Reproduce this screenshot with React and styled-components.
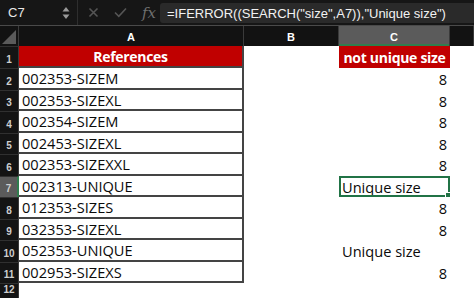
import React from "react"
import styled, { createGlobalStyle } from "styled-components"

const GlobalStyle = createGlobalStyle`
  html, body {
    margin: 0;
    padding: 0;
    background: #000;
  }
  #root {
    width: 474px;
    height: 298px;
    overflow: hidden;
  }
`

const Frame = styled.div`
  display: flex;
  flex-direction: column;
  width: 474px;
  height: 298px;
  background: #0d0d0d;
`

//Formula bar
const FormulaBar = styled.div`
  display: flex;
  align-items: center;
  height: 25px;
  background: #161616;
  border-bottom: 1px solid #4a4a4a;
  font-family: "Liberation Sans", Arial, sans-serif;
`

const NameBox = styled.div`
  display: flex;
  align-items: center;
  justify-content: space-between;
  box-sizing: border-box;
  width: 78px;
  height: 100%;
  padding: 0 7px 0 8px;
  color: #e8e8e8;
  font-size: 13px;
  border-right: 1px solid #2e2e2e;
`

const Spinner = styled.svg`
  width: 8px;
  height: 14px;
`

const Actions = styled.div`
  display: flex;
  align-items: center;
  gap: 15px;
  box-sizing: border-box;
  padding: 0 0 0 10px;
  width: 82px;
`

const Fx = styled.span`
  font-family: "DejaVu Serif", "Liberation Serif", serif;
  font-style: italic;
  color: #6e6e6e;
  font-size: 15px;
`

const FormulaInput = styled.div`
  flex: 1;
  display: flex;
  align-items: center;
  height: 20px;
  margin-top: 1px;
  padding-left: 7px;
  background: #2a2a2a;
  border-radius: 3px 0 0 3px;
  color: #f2f2f2;
  font-size: 13px;
  white-space: nowrap;
`

//Sheet grid
const Sheet = styled.div`
  flex: 1;
  display: grid;
  grid-template-columns: 19px 225px 95px 111px 1fr;
  grid-template-rows: 20px 22px repeat(10, 21.5px) 1fr;
  background: #ffffff;
  font-family: "Open Sans", "Noto Sans", sans-serif;
`

const Corner = styled.div`
  background: #121212;
  border-right: 1px solid #3a3a3a;
  position: relative;
  overflow: hidden;
  &::after {
    content: "";
    position: absolute;
    right: 2px;
    bottom: 2px;
    border-style: solid;
    border-width: 0 0 14px 14px;
    border-color: transparent transparent #5a5a5a transparent;
  }
`

const ColHead = styled.div`
  display: flex;
  align-items: center;
  justify-content: center;
  background: ${({ active }) => (active ? "#5b5b5b" : "#121212")};
  border-right: 1px solid #3a3a3a;
  box-shadow: ${({ active }) => (active ? "inset 0 -2px 0 #2f7d4d" : "none")};
  color: #ffffff;
  font-family: "Liberation Sans", Arial, sans-serif;
  font-weight: bold;
  font-size: 11px;
  padding-top: 1px;
`

const RowHead = styled.div`
  display: flex;
  align-items: flex-end;
  justify-content: center;
  padding-bottom: 3px;
  background: ${({ active }) => (active ? "#5b5b5b" : "#141414")};
  border-top: 1px solid #303030;
  border-right: ${({ active }) => (active ? "2px solid #2f7d4d" : "1px solid #3a3a3a")};
  color: #cfcfcf;
  font-family: "Liberation Sans", Arial, sans-serif;
  font-weight: bold;
  font-size: 10px;
`

const Cell = styled.div`
  position: relative;
  display: flex;
  align-items: center;
  justify-content: ${({ align }) =>
    align === "right" ? "flex-end" : align === "center" ? "center" : "flex-start"};
  padding: 1px 3px 0 3px;
  color: #0a0a0a;
  font-size: 14.6px;
  white-space: nowrap;
  background: ${({ header }) => (header ? "#c00000" : "#ffffff")};
  ${({ header }) => (header ? "color: #fff; font-weight: 700; font-size: 14px; letter-spacing: -0.3px;" : "")};
  ${({ grid }) =>
    grid
      ? "border-bottom: 2px solid #444; border-right: 2px solid #444;"
      : ""};
  ${({ selected }) =>
    selected ? "outline: 2px solid #217346; outline-offset: -2px;" : ""};
`

const Handle = styled.span`
  position: absolute;
  right: -2px;
  bottom: -2px;
  width: 5px;
  height: 5px;
  background: #217346;
  border: 1px solid #fff;
`

const references = [
  "002353-SIZEM",
  "002353-SIZEXL",
  "002354-SIZEM",
  "002453-SIZEXL",
  "002353-SIZEXXL",
  "002313-UNIQUE",
  "012353-SIZES",
  "032353-SIZEXL",
  "052353-UNIQUE",
  "002953-SIZEXS",
]

const result = ref => (ref.includes("SIZE") ? "8" : "Unique size")

export default function App() {
  return (
    <>
      <GlobalStyle />
      <Frame>
        <FormulaBar>
          <NameBox>
            <span>C7</span>
            <Spinner viewBox="0 0 8 14">
              <path d="M4 1 L7.5 5.5 H0.5 Z" fill="#9a9a9a" />
              <path d="M4 13 L7.5 8.5 H0.5 Z" fill="#9a9a9a" />
            </Spinner>
          </NameBox>
          <Actions>
            <svg width="11" height="11" viewBox="0 0 11 11">
              <path d="M1.5 1.5 L9.5 9.5 M9.5 1.5 L1.5 9.5" stroke="#555" strokeWidth="1.6" />
            </svg>
            <svg width="13" height="11" viewBox="0 0 13 11">
              <path d="M1 5.5 L4.8 9.3 L12 1.5" stroke="#555" strokeWidth="1.6" fill="none" />
            </svg>
            <Fx>fx</Fx>
          </Actions>
          <FormulaInput>=IFERROR((SEARCH("size",A7)),"Unique size")</FormulaInput>
        </FormulaBar>
        <Sheet>
          <Corner />
          <ColHead>A</ColHead>
          <ColHead>B</ColHead>
          <ColHead active>C</ColHead>
          <ColHead />

          <RowHead>1</RowHead>
          <Cell header align="center" grid>References</Cell>
          <Cell />
          <Cell header align="center">not unique size</Cell>
          <Cell />

          {references.map((ref, i) => {
            const row = i + 2
            const value = result(ref)
            const selected = row === 7
            return (
              <React.Fragment key={ref}>
                <RowHead active={selected}>{row}</RowHead>
                <Cell grid>{ref}</Cell>
                <Cell />
                <Cell align={value === "8" ? "right" : "left"} selected={selected}>
                  {value}
                  {selected && <Handle />}
                </Cell>
                <Cell />
              </React.Fragment>
            )
          })}

          <RowHead>12</RowHead>
          <Cell />
          <Cell />
          <Cell />
          <Cell />
        </Sheet>
      </Frame>
    </>
  )
}
